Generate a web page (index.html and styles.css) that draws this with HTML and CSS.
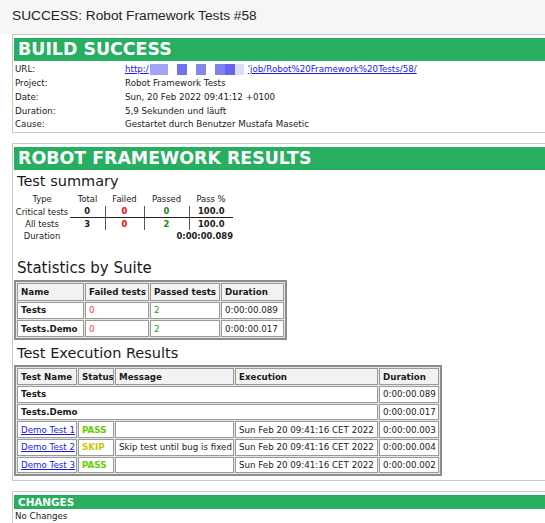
FILE: index.html
```html
<!DOCTYPE html>
<html lang="en">
<head>
    <meta charset="UTF-8">
    <title>SUCCESS: Robot Framework Tests #58</title>
    <link rel="stylesheet" href="styles.css">
</head>
<body>

    <div class="topbar">SUCCESS: Robot Framework Tests #58</div>

    <div class="page">

        <div class="section build">
            <div class="banner">BUILD SUCCESS</div>
            <div class="info">
                <span>URL:</span>
                <span class="url">
                    <a href="#">http:/</a>
                    <span class="blur">
                        <i class="b1"></i><i class="gap"></i><i class="b2"></i><i class="gap"></i><i class="b3"></i><i class="gap"></i><i class="b4"></i><i class="b5"></i><i class="b6"></i>
                    </span>
                    <a href="#">'job/Robot%20Framework%20Tests/58/</a>
                </span>
                <span>Project:</span><span>Robot Framework Tests</span>
                <span>Date:</span><span>Sun, 20 Feb 2022 09:41:12 +0100</span>
                <span>Duration:</span><span>5,9 Sekunden und läuft</span>
                <span>Cause:</span><span>Gestartet durch Benutzer Mustafa Masetic</span>
            </div>
        </div>

        <div class="section results">
            <div class="banner">ROBOT FRAMEWORK RESULTS</div>

            <div class="heading first">Test summary</div>
            <table class="summary">
                <tr>
                    <td class="type">Type</td>
                    <td>Total</td>
                    <td>Failed</td>
                    <td>Passed</td>
                    <td>Pass %</td>
                </tr>
                <tr class="critical">
                    <td class="type">Critical tests</td>
                    <td class="num">0</td>
                    <td class="num fail sep">0</td>
                    <td class="num pass sep">0</td>
                    <td class="num sep">100.0</td>
                </tr>
                <tr>
                    <td class="type">All tests</td>
                    <td class="num">3</td>
                    <td class="num fail sep">0</td>
                    <td class="num pass sep">2</td>
                    <td class="num sep">100.0</td>
                </tr>
                <tr>
                    <td class="type">Duration</td>
                    <td colspan="4" class="num total-time">0:00:00.089</td>
                </tr>
            </table>

            <div class="heading wide">Statistics by Suite</div>
            <table class="grid stats">
                <colgroup>
                    <col style="width: 67px">
                    <col style="width: 64px">
                    <col style="width: 70px">
                    <col style="width: 63px">
                </colgroup>
                <tr>
                    <th>Name</th>
                    <th>Failed tests</th>
                    <th>Passed tests</th>
                    <th>Duration</th>
                </tr>
                <tr>
                    <td><b>Tests</b></td>
                    <td class="red">0</td>
                    <td class="green">2</td>
                    <td>0:00:00.089</td>
                </tr>
                <tr>
                    <td><b>Tests.Demo</b></td>
                    <td class="red">0</td>
                    <td class="green">2</td>
                    <td>0:00:00.017</td>
                </tr>
            </table>

            <div class="heading">Test Execution Results</div>
            <table class="grid exec">
                <colgroup>
                    <col style="width: 60px">
                    <col style="width: 36px">
                    <col style="width: 119px">
                    <col style="width: 143px">
                    <col style="width: 60px">
                </colgroup>
                <tr>
                    <th>Test Name</th>
                    <th>Status</th>
                    <th>Message</th>
                    <th>Execution</th>
                    <th>Duration</th>
                </tr>
                <tr>
                    <td colspan="4"><b>Tests</b></td>
                    <td>0:00:00.089</td>
                </tr>
                <tr>
                    <td colspan="4"><b>Tests.Demo</b></td>
                    <td>0:00:00.017</td>
                </tr>
                <tr>
                    <td><a href="#">Demo Test 1</a></td>
                    <td class="st-pass">PASS</td>
                    <td></td>
                    <td>Sun Feb 20 09:41:16 CET 2022</td>
                    <td>0:00:00.003</td>
                </tr>
                <tr>
                    <td><a href="#">Demo Test 2</a></td>
                    <td class="st-skip">SKIP</td>
                    <td>Skip test until bug is fixed</td>
                    <td>Sun Feb 20 09:41:16 CET 2022</td>
                    <td>0:00:00.004</td>
                </tr>
                <tr>
                    <td><a href="#">Demo Test 3</a></td>
                    <td class="st-pass">PASS</td>
                    <td></td>
                    <td>Sun Feb 20 09:41:16 CET 2022</td>
                    <td>0:00:00.002</td>
                </tr>
            </table>
        </div>

        <div class="section changes">
            <div class="banner small">CHANGES</div>
            <div class="note">No Changes</div>
        </div>

    </div>

</body>
</html>
```

FILE: styles.css
```css
* {
    margin: 0;
    padding: 0;
    box-sizing: border-box;
}

body {
    background-color: white;
    color: #1a1a1a;
    font-family: "DejaVu Sans", Verdana, sans-serif;
    font-size: 8.7px;
    width: 545px;
    height: 523px;
    overflow: hidden;
}

a {
    color: #1a1aee;
}

.topbar {
    height: 34px;
    background: #f6f6f6;
    color: #242424;
    font-family: "Liberation Sans", Arial, sans-serif;
    font-size: 13.7px;
    line-height: 32px;
    padding-left: 12px;
}

.page {
    padding-left: 12px;
}

.section {
    width: 600px;
    border: 1px solid #c8c8c8;
    padding: 3px 0 0 1px;
}

.banner {
    background: #27ae60;
    color: white;
    font-weight: bold;
    font-size: 17.4px;
    height: 23px;
    line-height: 23px;
    padding-left: 4px;
}

.banner.small {
    font-size: 10.4px;
    height: 14px;
    line-height: 14px;
}

/* build info */

.info {
    display: grid;
    grid-template-columns: 110px 1fr;
    margin-top: 2px;
    line-height: 13.85px;
}

.info span {
    padding-left: 1px;
}

.url {
    display: flex;
    align-items: center;
}

.blur {
    display: flex;
    height: 11px;
    margin-right: 4px;
}

.blur i {
    display: block;
    width: 10px;
}

.blur .gap {
    width: 9px;
}

.blur .b1 { width: 18px; background: #a2a2f6; }
.blur .b2 { background: #7272ee; }
.blur .b3 { background: #8585ee; }
.blur .b4 { background: #8080ee; }
.blur .b5 { background: #6464ee; }
.blur .b6 { width: 9px; background: #dcdcf8; }

.section.results {
    margin-top: 10px;
    padding-bottom: 4px;
}

/* robot results */

.heading {
    font-size: 14.5px;
    line-height: 17px;
    padding-left: 3px;
    margin-top: 5px;
}

.heading.first {
    margin-top: 3px;
}

.heading.wide {
    font-size: 15px;
}

.summary {
    border-collapse: collapse;
    margin-top: 3px;
    margin-bottom: 18px;
    font-size: 8.4px;
}

.summary td {
    height: 12.3px;
    padding: 0;
    text-align: center;
}

.summary td:nth-child(1) { width: 56px; }
.summary td:nth-child(2) { width: 35px; }
.summary td:nth-child(3) { width: 39px; }
.summary td:nth-child(4) { width: 45px; }
.summary td:nth-child(5) { width: 44px; }

.summary .num {
    font-weight: bold;
}

.summary .sep {
    border-left: 1px solid #555;
}

.summary .critical td:not(.type) {
    border-bottom: 1px solid #222;
}

.summary .fail { color: #ff0000; }
.summary .pass { color: #1a8a1a; }

.summary .total-time {
    text-align: right;
}

.grid {
    table-layout: fixed;
    border: 2px solid #8c8c8c;
    border-collapse: separate;
    border-spacing: 1px;
    background: #e6e6e6;
    margin-top: 3px;
}

.grid th,
.grid td {
    border: 1px solid #9a9a9a;
    background: white;
    text-align: left;
    padding: 0 3px;
    white-space: nowrap;
    overflow: hidden;
}

.grid th {
    background: #f2f2f2;
    font-weight: bold;
}

.stats { width: 273px; }
.stats th, .stats td { height: 17.3px; }

.exec { width: 428px; }
.exec th, .exec td { height: 16.7px; }

.red { color: #ff3b3b; }
.green { color: #2a9a2a; }

.st-pass { color: #66cc00; font-weight: bold; }
.st-skip { color: #c8c800; font-weight: bold; }

.section.changes {
    margin-top: 10px;
    height: 60px;
}

.note {
    line-height: 15px;
    padding-left: 1px;
}
```
